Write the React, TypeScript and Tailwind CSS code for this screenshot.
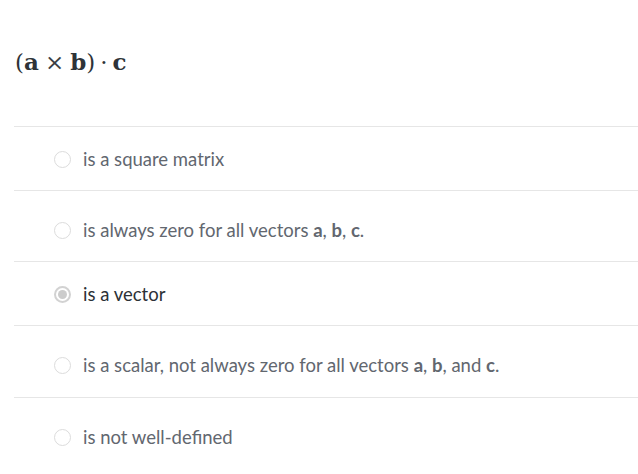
import React from 'react';

type Option = { id: number; pt: string; pb: string; content: React.ReactNode };

const B = ({ children }: { children: React.ReactNode }) => <span className="font-bold">{children}</span>;

const options: Option[] = [
  { id: 1, pt: 'pt-[22px]', pb: 'pb-[21px]', content: 'is a square matrix' },
  {
    id: 2,
    pt: 'pt-[29px]',
    pb: 'pb-[21px]',
    content: (
      <>
        is always zero for all vectors <B>a</B>, <B>b</B>, <B>c</B>.
      </>
    ),
  },
  { id: 3, pt: 'pt-[22px]', pb: 'pb-[21px]', content: 'is a vector' },
  {
    id: 4,
    pt: 'pt-[29px]',
    pb: 'pb-[22px]',
    content: (
      <>
        is a scalar, not always zero for all vectors <B>a</B>, <B>b</B>, and <B>c</B>.
      </>
    ),
  },
  { id: 5, pt: 'pt-[29px]', pb: 'pb-[21px]', content: 'is not well-defined' },
];

function Radio({ checked }: { checked: boolean }) {
  if (checked) {
    return (
      <span className="flex h-[17px] w-[17px] shrink-0 items-center justify-center rounded-full border-2 border-[#d2d2d2] bg-white">
        <span className="h-[9px] w-[9px] rounded-full bg-[#cccccc]" />
      </span>
    );
  }
  return <span className="h-[17px] w-[17px] shrink-0 rounded-full border border-[#dcdcdc] bg-white" />;
}

export default function App() {
  const selected = 3;
  return (
    <div className="min-h-[474px] bg-white pt-[46px] font-['Lato','Open_Sans',sans-serif]">
      <div className="pl-[15px] font-['DejaVu_Serif','Liberation_Serif',serif] text-[23px] leading-[32px] text-[#2e3338]">
        <span>(</span>
        <span className="font-bold">a</span>
        <span className="mx-[6px] font-light text-[#3a3f44]">×</span>
        <span className="font-bold">b</span>
        <span>)</span>
        <span className="mx-[5px]">·</span>
        <span className="font-bold">c</span>
      </div>

      <div className="ml-[14px] mt-[48px]">
        {options.map((o) => (
          <div
            key={o.id}
            className={`flex items-center gap-[12px] border-t border-[#e6e6e6] pl-[40px] ${o.pt} ${o.pb}`}
          >
            <Radio checked={o.id === selected} />
            <span
              className={`text-[18.5px] leading-[20px] ${
                o.id === selected ? 'text-[#2c3136]' : 'text-[#62676f]'
              }`}
            >
              {o.content}
            </span>
          </div>
        ))}
      </div>
    </div>
  );
}
